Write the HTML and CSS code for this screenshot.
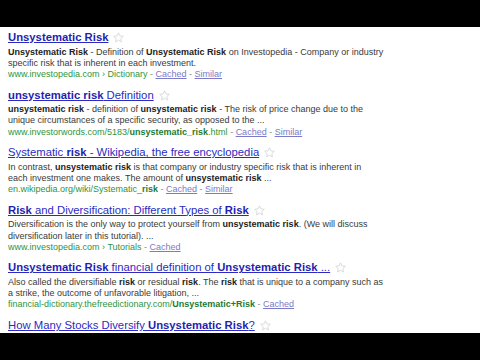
FILE: index.html
```html
<!DOCTYPE html>
<html>
<head>
<meta charset="utf-8">
<link rel="stylesheet" href="styles.css">
</head>
<body>
<div class="bar-top"></div>
<div class="page">
  <ol class="results">
    <li class="result">
      <h3 class="title"><a href="#"><b>Unsystematic Risk</b></a><svg class="star" viewBox="0 0 20 20"><path d="M10 1.5l2.6 5.6 6.1.7-4.5 4.2 1.2 6-5.4-3-5.4 3 1.2-6-4.5-4.2 6.1-.7z"/></svg></h3>
      <div class="snip"><b>Unsystematic Risk</b> - Definition of <b>Unsystematic Risk</b> on Investopedia - Company or industry<br>specific risk that is inherent in each investment.</div>
      <div class="meta"><cite>www.investopedia.com › Dictionary</cite><span class="sep"> - </span><a class="fl" href="#">Cached</a><span class="sep"> - </span><a class="fl" href="#">Similar</a></div>
    </li>
    <li class="result">
      <h3 class="title"><a href="#"><b>unsystematic risk</b> Definition</a><svg class="star" viewBox="0 0 20 20"><path d="M10 1.5l2.6 5.6 6.1.7-4.5 4.2 1.2 6-5.4-3-5.4 3 1.2-6-4.5-4.2 6.1-.7z"/></svg></h3>
      <div class="snip"><b>unsystematic risk</b> - definition of <b>unsystematic risk</b> - The risk of price change due to the<br>unique circumstances of a specific security, as opposed to the ...</div>
      <div class="meta"><cite>www.investorwords.com/5183/<b>unsystematic_risk</b>.html</cite><span class="sep"> - </span><a class="fl" href="#">Cached</a><span class="sep"> - </span><a class="fl" href="#">Similar</a></div>
    </li>
    <li class="result">
      <h3 class="title"><a href="#">Systematic <b>risk</b> - Wikipedia, the free encyclopedia</a><svg class="star" viewBox="0 0 20 20"><path d="M10 1.5l2.6 5.6 6.1.7-4.5 4.2 1.2 6-5.4-3-5.4 3 1.2-6-4.5-4.2 6.1-.7z"/></svg></h3>
      <div class="snip">In contrast, <b>unsystematic risk</b> is that company or industry specific risk that is inherent in<br>each investment one makes. The amount of <b>unsystematic risk</b> ...</div>
      <div class="meta"><cite>en.wikipedia.org/wiki/Systematic_<b>risk</b></cite><span class="sep"> - </span><a class="fl" href="#">Cached</a><span class="sep"> - </span><a class="fl" href="#">Similar</a></div>
    </li>
    <li class="result">
      <h3 class="title"><a href="#"><b>Risk</b> and Diversification: Different Types of <b>Risk</b></a><svg class="star" viewBox="0 0 20 20"><path d="M10 1.5l2.6 5.6 6.1.7-4.5 4.2 1.2 6-5.4-3-5.4 3 1.2-6-4.5-4.2 6.1-.7z"/></svg></h3>
      <div class="snip">Diversification is the only way to protect yourself from <b>unsystematic risk</b>. (We will discuss<br>diversification later in this tutorial). ...</div>
      <div class="meta"><cite>www.investopedia.com › Tutorials</cite><span class="sep"> - </span><a class="fl" href="#">Cached</a></div>
    </li>
    <li class="result">
      <h3 class="title"><a href="#"><b>Unsystematic Risk</b> financial definition of <b>Unsystematic Risk</b> ...</a><svg class="star" viewBox="0 0 20 20"><path d="M10 1.5l2.6 5.6 6.1.7-4.5 4.2 1.2 6-5.4-3-5.4 3 1.2-6-4.5-4.2 6.1-.7z"/></svg></h3>
      <div class="snip">Also called the diversifiable <b>risk</b> or residual <b>risk</b>. The <b>risk</b> that is unique to a company such as<br>a strike, the outcome of unfavorable litigation, ...</div>
      <div class="meta"><cite>financial-dictionary.thefreedictionary.com/<b>Unsystematic+Risk</b></cite><span class="sep"> - </span><a class="fl" href="#">Cached</a></div>
    </li>
    <li class="result">
      <h3 class="title"><a href="#">How Many Stocks Diversify <b>Unsystematic Risk</b>?</a><svg class="star" viewBox="0 0 20 20"><path d="M10 1.5l2.6 5.6 6.1.7-4.5 4.2 1.2 6-5.4-3-5.4 3 1.2-6-4.5-4.2 6.1-.7z"/></svg></h3>
    </li>
  </ol>
</div>
<div class="bar-bottom"></div>
</body>
</html>
```

FILE: styles.css
```css
html, body {
  margin: 0;
  padding: 0;
  background: #000;
  width: 480px;
  height: 360px;
  overflow: hidden;
}

.bar-top {
  height: 27px;
  background: #000;
}

.bar-bottom {
  height: 27px;
  background: #000;
}

.page {
  height: 306px;
  overflow: hidden;
  background: #fff;
  padding: 3px 0 0 8px;
  box-sizing: border-box;
  font-family: "Liberation Sans", Arial, sans-serif;
  color: #333;
}

.results {
  list-style: none;
  margin: 0;
  padding: 0;
}

.result {
  margin: 0 0 7.5px 0;
}

.title {
  margin: 0 0 1.5px 0;
  font-size: 11.3px;
  font-weight: normal;
  line-height: 15px;
  display: flex;
  align-items: center;
  white-space: nowrap;
}

.title a {
  color: #2b2bc2;
  text-decoration: underline;
}

.title b {
  color: #1f1fb0;
}

.star {
  width: 11px;
  height: 11px;
  margin-left: 5px;
  fill: none;
  stroke: #d6d6da;
  stroke-width: 1.6;
  stroke-linejoin: round;
}

.snip {
  font-size: 9px;
  line-height: 11.2px;
  color: #3a3a3a;
  white-space: nowrap;
}

.snip b {
  color: #222;
}

.meta {
  font-size: 9px;
  line-height: 11.2px;
  white-space: nowrap;
}

.meta cite {
  font-style: normal;
  color: #2f9440;
}

.meta cite b {
  color: #1f7a30;
}

.sep {
  color: #888;
}

.fl {
  color: #7a7ac8;
  text-decoration: underline;
}
```
